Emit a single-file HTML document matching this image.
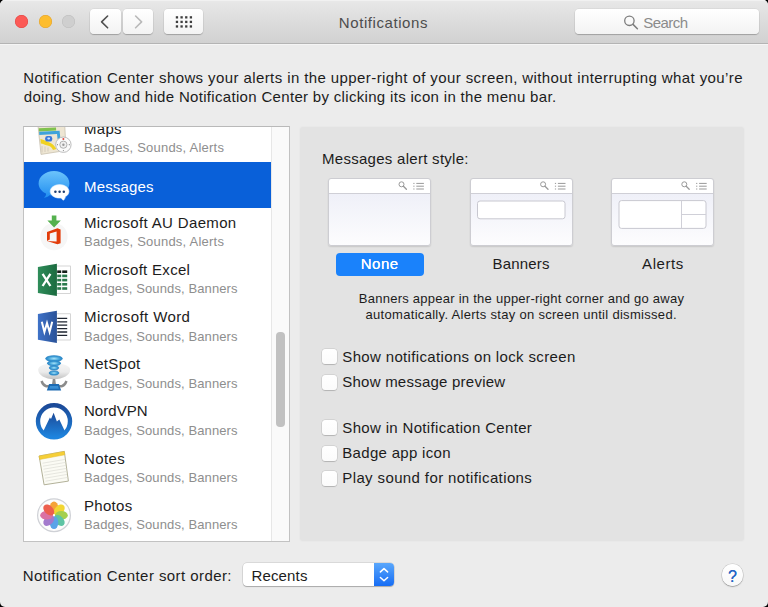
<!DOCTYPE html>
<html lang="en">
<head>
<meta charset="utf-8">
<title>Notifications</title>
<style>
*{box-sizing:border-box;margin:0;padding:0}
html,body{width:768px;height:607px;overflow:hidden;background:#000}
body{font-family:"Liberation Sans",sans-serif;color:#1c1c1c;position:relative}
#win{position:absolute;left:0;top:0;width:768px;height:607px;background:#ececec;border-radius:5px;overflow:hidden}
#tb{position:absolute;left:0;top:0;width:768px;height:44px;background:linear-gradient(#e9e9e9,#e5e5e5 12%,#d1d1d1);border-bottom:1px solid #b4b4b4;box-shadow:inset 0 1px 0 #f1f1f1,0 1px 0 #f5f5f5}
.tl{position:absolute;top:15px;width:13px;height:13px;border-radius:50%}
.btn{position:absolute;top:8.8px;height:24.8px;background:linear-gradient(#ffffff,#f3f3f3);border-radius:4px;box-shadow:0 0 0 .5px rgba(0,0,0,.08),0 1px 1px rgba(0,0,0,.22)}
.t{position:absolute;white-space:nowrap;line-height:20px;height:20px}
#list{position:absolute;left:23px;top:126px;width:267px;height:416px;background:#fff;border:1px solid #c2c2c2;border-top-color:#b9b9b9;overflow:hidden}
#inner{position:absolute;left:0;top:0;width:265px;height:414px}
#sel{position:absolute;left:0;top:35px;width:247px;height:46px;background:#0960d9}
#sbar{position:absolute;left:247px;top:0;width:18px;height:414px;background:#fafafa;border-left:1px solid #e7e7e7}
#thumb{position:absolute;left:251.8px;top:205.3px;width:8.8px;height:94.4px;border-radius:4px;background:#c1c1c1}
#icons{position:absolute;left:0;top:0}
#panel{position:absolute;left:300.3px;top:126.5px;width:444.2px;height:414.6px;background:#e3e3e3;border-radius:3px;box-shadow:0 0 0 1px #e9e9e9}
.th{position:absolute;top:178px;width:103px;height:68px;background:linear-gradient(#fff 0,#fff 14px,#cfcfd6 14px,#cfcfd6 15px,#eff0f8 15px,#fdfdfe 67px);border:1px solid #cdcdd2;border-radius:3px;box-shadow:0 1px 1.5px rgba(0,0,0,.12)}
.cb{position:absolute;left:322px;width:15px;height:15px;background:linear-gradient(#fff,#fbfbfb);border-radius:3.5px;box-shadow:0 0 0 .5px rgba(0,0,0,.14),0 1px 1px rgba(0,0,0,.15)}
svg{position:absolute;overflow:visible}
</style>
</head>
<body>
<div id="win">
 <div id="tb">
  <div class="tl" style="left:15px;background:#fc5a56;box-shadow:inset 0 0 0 .5px #df4340"></div>
  <div class="tl" style="left:38.5px;background:#fdbd2e;box-shadow:inset 0 0 0 .5px #dea032"></div>
  <div class="tl" style="left:61.5px;background:#cfcfcf;box-shadow:inset 0 0 0 .5px #bcbcbc"></div>
  <div class="btn" style="left:90px;width:31px"></div>
  <div class="btn" style="left:122.5px;width:30.5px"></div>
  <div class="btn" style="left:164.2px;width:39.2px"></div>
  <div class="btn" style="left:575px;width:184px"></div>
  <svg width="768" height="44" style="left:0;top:0" viewBox="0 0 768 44">
   <path d="M107.6 16 L101.6 21.9 L107.6 27.8" fill="none" stroke="#505050" stroke-width="1.6" stroke-linecap="round" stroke-linejoin="round"/>
   <path d="M135.6 16 L141.6 21.9 L135.6 27.8" fill="none" stroke="#b9b9b9" stroke-width="1.6" stroke-linecap="round" stroke-linejoin="round"/>
   <g fill="#3d3d3d">
    <rect x="175.8" y="16.2" width="2.3" height="2.3"/><rect x="180.45" y="16.2" width="2.3" height="2.3"/><rect x="185.1" y="16.2" width="2.3" height="2.3"/><rect x="189.75" y="16.2" width="2.3" height="2.3"/>
    <rect x="175.8" y="20.75" width="2.3" height="2.3"/><rect x="180.45" y="20.75" width="2.3" height="2.3"/><rect x="185.1" y="20.75" width="2.3" height="2.3"/><rect x="189.75" y="20.75" width="2.3" height="2.3"/>
    <rect x="175.8" y="25.3" width="2.3" height="2.3"/><rect x="180.45" y="25.3" width="2.3" height="2.3"/><rect x="185.1" y="25.3" width="2.3" height="2.3"/><rect x="189.75" y="25.3" width="2.3" height="2.3"/>
   </g>
   <circle cx="629.4" cy="20.8" r="4.7" fill="none" stroke="#7d7d7d" stroke-width="1.3"/>
   <path d="M633 24.4 L637.4 28.8" stroke="#7d7d7d" stroke-width="1.5" stroke-linecap="round"/>
  </svg>
 </div>

 <div id="list">
  <div id="inner">
   <div id="sel"></div>
   <div id="sbar"></div>
   <div id="thumb"></div>
   <svg id="icons" width="265" height="414" viewBox="24 127 265 414">
<defs>
 <linearGradient id="gMsg" x1="0" y1="0" x2="0" y2="1"><stop offset="0" stop-color="#6cc4fb"/><stop offset="1" stop-color="#1f8df0"/></linearGradient>
 <linearGradient id="gXl" x1="0" y1="0" x2="1" y2="0"><stop offset="0" stop-color="#2f8d5a"/><stop offset="1" stop-color="#1b6b3f"/></linearGradient>
 <linearGradient id="gWd" x1="0" y1="0" x2="1" y2="0"><stop offset="0" stop-color="#3f72c8"/><stop offset="1" stop-color="#2a5298"/></linearGradient>
 <linearGradient id="gNord" x1="0" y1="0" x2="0" y2="1"><stop offset="0" stop-color="#1c4a98"/><stop offset="1" stop-color="#1e84de"/></linearGradient>
 <linearGradient id="gDish" x1="0" y1="0" x2="0" y2="1"><stop offset="0" stop-color="#f6f6f6"/><stop offset=".55" stop-color="#ebebeb"/><stop offset="1" stop-color="#c2c2c2"/></linearGradient>
 <radialGradient id="gArc"><stop offset="0" stop-color="#a8e2f8"/><stop offset=".6" stop-color="#4aa8dc"/><stop offset="1" stop-color="#2483c6"/></radialGradient>
 <clipPath id="clipList"><rect x="24" y="127" width="248" height="414"/></clipPath>
</defs>
<g clip-path="url(#clipList)">
<!-- Maps -->
<g>
 <path d="M37.6 122 L64.5 120 L66 150.5 L41 154.4 Z" fill="#eee6d3" stroke="#c9c2b0" stroke-width=".8"/>
 <path d="M38.7 128.2 L56 127.6 L56.2 130.6 L39 131.4 Z" fill="#7fc24e"/>
 <path d="M39.1 131.8 L59.6 130.8 L60.4 139 L57.6 139.3 L57 134 L39.3 135 Z" fill="#3fa3da"/>
 <path d="M40.4 139 C44 139.5 47 141.5 50.5 143 C53 144 54.5 146 56.5 149 L53 150 C51.5 147 50 146 47.5 145.5 C44.5 145 42.5 143.5 40.8 143.6 Z" fill="#f0d220"/>
 <path d="M42 146 V152.5 M45 146.5 V152 M48 147.5 V151.6" stroke="#d8cfc0" stroke-width="1.2"/>
 <rect x="45.2" y="136" width="7" height="5.6" rx="2.2" fill="#3b78da"/>
 <rect x="47.3" y="137.6" width="2.8" height="1.8" rx=".8" fill="#cfe2fb"/>
 <circle cx="63.4" cy="144.7" r="7.7" fill="#fbfbfb" stroke="#b5b5b5" stroke-width=".9"/>
 <circle cx="63.4" cy="144.7" r="3.6" fill="#f0f0f0" stroke="#a9a9a9" stroke-width=".9"/>
 <circle cx="63.4" cy="144.7" r="1.2" fill="#9a9a9a"/>
 <circle cx="63.4" cy="139.1" r="1" fill="#e0453a"/>
 <circle cx="69.3" cy="144.7" r=".6" fill="#888"/><circle cx="63.4" cy="150.6" r=".6" fill="#888"/><circle cx="57.5" cy="144.7" r=".6" fill="#888"/>
</g>
</g>
<!-- Messages -->
<g>
 <path d="M43.8 197.8 C45.6 196.6 46.2 195 46 193.6 C41.4 191.2 38.6 187.6 38.6 183.4 C38.6 176.6 45.4 171 54 171 C62.6 171 69.4 176.6 69.4 183.4 C69.4 190.2 62.6 195.8 54 195.8 C52.4 195.8 50.9 195.6 49.5 195.3 C48.2 196.8 46.1 197.8 43.8 197.8 Z" fill="url(#gMsg)"/>
 <path d="M63.6 200.2 C62.2 199.6 61.4 198.8 61.2 198 C60.7 198.1 60.1 198.1 59.6 198.1 C54.4 198.1 50.2 195.1 50.2 191.4 C50.2 187.7 54.4 184.6 59.6 184.6 C64.8 184.6 69 187.7 69 191.4 C69 193.5 67.6 195.4 65.5 196.6 C65.2 198 64.4 199.4 63.6 200.2 Z" fill="#fff" stroke="#d9ecfb" stroke-width=".6"/>
 <circle cx="55.4" cy="191.8" r="1.25" fill="#1d3e73"/><circle cx="59.6" cy="191.8" r="1.25" fill="#1d3e73"/><circle cx="63.8" cy="191.8" r="1.25" fill="#1d3e73"/>
</g>
<!-- Microsoft AU Daemon -->
<g>
 <circle cx="54" cy="236.6" r="13.6" fill="#f6f6f6"/>
 <path d="M51.8 215.4 H56.4 V220.4 H60.8 L54.1 227.4 L47.4 220.4 H51.8 Z" fill="#55b14e"/>
 <path d="M57.4 228.3 L60.6 229.4 V243.2 L57.4 244.3 L47 240.9 L49.8 239.6 V233.4 L56.6 231.6 V241.6 L47 240.9 V232.1 Z" fill="#e23c0a" fill-rule="evenodd"/>
</g>
<!-- Excel -->
<g>
 <rect x="56.5" y="266" width="14" height="27.4" fill="#fff" stroke="#c4c4c4" stroke-width=".7"/>
 <g fill="#2a7a4c">
  <rect x="57.2" y="270.4" width="4" height="2.6" fill="#16201a"/><rect x="62.2" y="270.4" width="5" height="2.6" fill="#16201a"/>
  <rect x="57.2" y="274.6" width="4" height="2.6"/><rect x="62.2" y="274.6" width="5" height="2.6"/>
  <rect x="57.2" y="278.8" width="4" height="2.6"/><rect x="62.2" y="278.8" width="5" height="2.6"/>
  <rect x="57.2" y="283" width="4" height="2.6"/><rect x="62.2" y="283" width="5" height="2.6"/>
  <rect x="57.2" y="287.2" width="4" height="2.6"/><rect x="62.2" y="287.2" width="5" height="2.6"/>
 </g>
 <path d="M37.9 267.1 L56.9 263.8 V296 L37.9 293.1 Z" fill="url(#gXl)"/>
 <path d="M42.6 273.8 L50.4 286 M50.4 273.8 L42.6 286" stroke="#fff" stroke-width="2.3" fill="none"/>
</g>
<!-- Word -->
<g>
 <rect x="56.5" y="313.8" width="14" height="26.2" fill="#fff" stroke="#c4c4c4" stroke-width=".7"/>
 <path d="M57.2 318.3H67.2M57.2 321.8H67.2M57.2 325.2H67.2M57.2 328.6H67.2M57.2 332H67.2M57.2 335.4H67.2" stroke="#1e2430" stroke-width="1.3"/>
 <path d="M37.9 314.1 L56.9 310.8 V343 L37.9 339.7 Z" fill="url(#gWd)"/>
 <path d="M41.8 321.8 L44.4 332 L47 323 L49.6 332 L52.2 321.8" stroke="#fff" stroke-width="2" fill="none" stroke-linejoin="miter"/>
</g>
<!-- NetSpot -->
<g>
 <path d="M41.5 381 C43.5 386.5 47.5 387.5 51.5 385 M66.5 381 C64.5 386.5 60.5 387.5 56.5 385" stroke="#6e6e6e" stroke-width="2.4" fill="none" opacity=".8"/>
 <path d="M38.2 369.8 C38.2 365.6 45 363.2 54 363.2 C63 363.2 70.2 365.6 70.2 369.8 C70.2 375 63 379.2 54 379.2 C45 379.2 38.2 375 38.2 369.8 Z" fill="url(#gDish)"/>
 <path d="M52.8 379 L55.2 379 L56 384.4 L52 384.4 Z" fill="#8e8e8e"/>
 <path d="M49.2 384 H58.8 L61.2 390.6 H46.8 Z" fill="#1d6ab2"/>
 <path d="M50 386 H58 L58.8 388.8 H49.2 Z" fill="#3a8fd4"/>
 <ellipse cx="54" cy="358.6" rx="8.4" ry="2.9" fill="url(#gArc)" stroke="#2b86c6" stroke-width=".8"/>
 <ellipse cx="54" cy="363.3" rx="6.6" ry="2.5" fill="url(#gArc)" stroke="#2b86c6" stroke-width=".8"/>
 <ellipse cx="54" cy="367.8" rx="4.6" ry="2.1" fill="url(#gArc)" stroke="#2b86c6" stroke-width=".8"/>
 <ellipse cx="54" cy="373" rx="4.8" ry="2.1" fill="url(#gArc)" stroke="#2b86c6" stroke-width=".8"/>
</g>
<!-- NordVPN -->
<g>
 <circle cx="54" cy="421.3" r="16" fill="#fff" stroke="url(#gNord)" stroke-width="4.4"/>
 <path d="M53.6 412.7 L56.9 421.6 L59.3 419.6 L64.8 431 C62 435 58 437 54 437 C50 437 46 435 43.4 431 L49.9 417.4 L51 419 Z" fill="url(#gNord)"/>
</g>
<!-- Notes -->
<g>
 <path d="M39.1 456 L64.3 451.4 L68.4 481.1 L44.1 484.8 Z" fill="#fbfbf4" stroke="#a9a88d" stroke-width=".9"/>
 <path d="M39.1 456 L64.3 451.4 L64.8 454.8 L39.7 459.5 Z" fill="#f6cf37" stroke="#e5bd2a" stroke-width=".5"/>
 <path d="M42.5 463.2 L65.2 459.4 M43 466.2 L65.6 462.4 M43.5 469.2 L66 465.4 M44 472.2 L66.4 468.4 M44.5 475.2 L66.8 471.4 M45 478.2 L67.2 474.4 M45.5 481.2 L67.6 477.4" stroke="#dcdcd6" stroke-width=".7"/>
</g>
<!-- Photos -->
<g>
 <circle cx="54" cy="515.2" r="16.4" fill="#fcfcfc" stroke="#cfd1d6" stroke-width="1.2"/>
 <g transform="translate(54 515.2)" opacity=".9">
  <ellipse cx="0" cy="-7.4" rx="4.3" ry="6.4" fill="#f59a23"/>
  <ellipse cx="0" cy="-7.4" rx="4.3" ry="6.4" fill="#f2d21e" transform="rotate(45)"/>
  <ellipse cx="0" cy="-7.4" rx="4.3" ry="6.4" fill="#9ccb3c" transform="rotate(90)"/>
  <ellipse cx="0" cy="-7.4" rx="4.3" ry="6.4" fill="#4dbf9b" transform="rotate(135)"/>
  <ellipse cx="0" cy="-7.4" rx="4.3" ry="6.4" fill="#4a9be6" transform="rotate(180)"/>
  <ellipse cx="0" cy="-7.4" rx="4.3" ry="6.4" fill="#9a6dc8" transform="rotate(225)"/>
  <ellipse cx="0" cy="-7.4" rx="4.3" ry="6.4" fill="#d8629a" transform="rotate(270)"/>
  <ellipse cx="0" cy="-7.4" rx="4.3" ry="6.4" fill="#ec4f3c" transform="rotate(315)"/>
  <circle r="1" fill="#fff"/>
 </g>
</g>

   </svg>
<div class="t" style="left:60.00px;top:-8.50px;font-size:15px;letter-spacing:0.300px;color:#1c1c1c;">Maps</div>
<div class="t" style="left:60.00px;top:49.80px;font-size:15px;letter-spacing:0.161px;color:#fff;">Messages</div>
<div class="t" style="left:60.00px;top:85.90px;font-size:15px;letter-spacing:0.351px;color:#1c1c1c;">Microsoft AU Daemon</div>
<div class="t" style="left:60.00px;top:132.80px;font-size:15px;letter-spacing:0.304px;color:#1c1c1c;">Microsoft Excel</div>
<div class="t" style="left:60.00px;top:179.90px;font-size:15px;letter-spacing:0.413px;color:#1c1c1c;">Microsoft Word</div>
<div class="t" style="left:60.00px;top:227.10px;font-size:15px;letter-spacing:0.342px;color:#1c1c1c;">NetSpot</div>
<div class="t" style="left:60.00px;top:274.30px;font-size:15px;letter-spacing:0.037px;color:#1c1c1c;">NordVPN</div>
<div class="t" style="left:60.00px;top:321.60px;font-size:15px;letter-spacing:0.394px;color:#1c1c1c;">Notes</div>
<div class="t" style="left:60.00px;top:368.50px;font-size:15px;letter-spacing:0.290px;color:#1c1c1c;">Photos</div>
<div class="t" style="left:60.00px;top:10.60px;font-size:13px;letter-spacing:0.227px;color:#8e8e8e;">Badges, Sounds, Alerts</div>
<div class="t" style="left:60.00px;top:105.10px;font-size:13px;letter-spacing:0.227px;color:#8e8e8e;">Badges, Sounds, Alerts</div>
<div class="t" style="left:60.00px;top:152.30px;font-size:13px;letter-spacing:0.114px;color:#8e8e8e;">Badges, Sounds, Banners</div>
<div class="t" style="left:60.00px;top:199.60px;font-size:13px;letter-spacing:0.114px;color:#8e8e8e;">Badges, Sounds, Banners</div>
<div class="t" style="left:60.00px;top:246.60px;font-size:13px;letter-spacing:0.114px;color:#8e8e8e;">Badges, Sounds, Banners</div>
<div class="t" style="left:60.00px;top:293.70px;font-size:13px;letter-spacing:0.114px;color:#8e8e8e;">Badges, Sounds, Banners</div>
<div class="t" style="left:60.00px;top:340.80px;font-size:13px;letter-spacing:0.114px;color:#8e8e8e;">Badges, Sounds, Banners</div>
<div class="t" style="left:60.00px;top:388.00px;font-size:13px;letter-spacing:0.114px;color:#8e8e8e;">Badges, Sounds, Banners</div>
  </div>
 </div>

 <div id="panel"></div>
 <div class="th" style="left:328px"></div>
 <div class="th" style="left:470px"></div>
 <div class="th" style="left:611px"></div>
 <svg width="445" height="130" style="left:300px;top:170px" viewBox="300 170 445 130">
  <g id="ti" fill="none" stroke="#999">
   <circle cx="401.5" cy="184.3" r="2.5" stroke-width="1"/>
   <path d="M403.4 186.3 L406.4 189.3" stroke-width="1.3" stroke-linecap="round"/>
   <path d="M413.3 183.4h1.2M413.3 186.2h1.2M413.3 189h1.2M416.3 183.4h7.6M416.3 186.2h7.6M416.3 189h7.6" stroke-width="1"/>
  </g>
  <use href="#ti" x="141.6"/>
  <use href="#ti" x="282.8"/>
  <rect x="477.5" y="201" width="87.5" height="17.8" rx="2.5" fill="#fff" stroke="#c8c8d0" stroke-width="1"/>
  <rect x="619" y="200.6" width="87" height="27.8" rx="2.5" fill="#fff" stroke="#c8c8d0" stroke-width="1"/>
  <path d="M681.5 200.6V228.4M681.5 214.5H706" stroke="#d0d0d8" stroke-width="1" fill="none"/>
  <rect x="336" y="253" width="88" height="23" rx="4" fill="#1a82fb"/>
 </svg>

 <div class="cb" style="top:349.2px"></div>
 <div class="cb" style="top:374.8px"></div>
 <div class="cb" style="top:420.4px"></div>
 <div class="cb" style="top:445.9px"></div>
 <div class="cb" style="top:471.2px"></div>

 <div style="position:absolute;left:242.5px;top:563px;width:151px;height:22.5px;background:#fff;border-radius:4px;box-shadow:0 0 0 .5px rgba(0,0,0,.16),0 1px 1px rgba(0,0,0,.22)"></div>
 <div style="position:absolute;left:374px;top:563px;width:19.5px;height:22.5px;background:linear-gradient(#5aa7fc,#166df4);border-radius:0 4px 4px 0"></div>
 <svg width="19" height="23" style="left:374.5px;top:563px" viewBox="374.5 563 19 23">
  <path d="M379.9 571.9 L383.5 568.6 L387.1 571.9 M379.9 577.5 L383.5 580.8 L387.1 577.5" fill="none" stroke="#fff" stroke-width="1.5" stroke-linecap="round" stroke-linejoin="round"/>
 </svg>
 <div style="position:absolute;left:721.6px;top:564px;width:21.6px;height:21.6px;border-radius:50%;background:linear-gradient(#fff,#f8f8f8);box-shadow:0 0 0 .5px rgba(0,0,0,.16),0 1px 1.2px rgba(0,0,0,.28)"></div>
 <div class="t" style="left:721.5px;width:22px;text-align:center;top:566.8px;color:#2565c4;font-size:16px;text-shadow:0 0 .3px #1e63c8">?</div>

<div class="t" style="left:23.30px;top:67.80px;font-size:15px;letter-spacing:0.406px;color:#1c1c1c;">Notification Center shows your alerts in the upper-right of your screen, without interrupting what you’re</div>
<div class="t" style="left:23.80px;top:87.30px;font-size:15px;letter-spacing:0.318px;color:#1c1c1c;">doing. Show and hide Notification Center by clicking its icon in the menu bar.</div>
<div class="t" style="left:338.80px;top:13.00px;font-size:15px;letter-spacing:0.579px;color:#4d4d4d;">Notifications</div>
<div class="t" style="left:643.30px;top:12.90px;font-size:15px;letter-spacing:-0.560px;color:#8b8b8b;">Search</div>
<div class="t" style="left:322.05px;top:148.55px;font-size:15px;letter-spacing:0.279px;color:#1c1c1c;">Messages alert style:</div>
<div class="t" style="left:360.80px;top:253.70px;font-size:15px;letter-spacing:0.475px;color:#fff;text-shadow:0 0 .4px #fff;">None</div>
<div class="t" style="left:492.50px;top:253.70px;font-size:15px;letter-spacing:0.171px;color:#1c1c1c;">Banners</div>
<div class="t" style="left:642.10px;top:253.70px;font-size:15px;letter-spacing:0.545px;color:#1c1c1c;">Alerts</div>
<div class="t" style="left:358.80px;top:289.00px;font-size:13px;letter-spacing:0.254px;color:#1c1c1c;">Banners appear in the upper-right corner and go away</div>
<div class="t" style="left:365.55px;top:304.50px;font-size:13px;letter-spacing:0.302px;color:#1c1c1c;">automatically. Alerts stay on screen until dismissed.</div>
<div class="t" style="left:342.30px;top:346.70px;font-size:15px;letter-spacing:0.348px;color:#1c1c1c;">Show notifications on lock screen</div>
<div class="t" style="left:342.30px;top:372.20px;font-size:15px;letter-spacing:0.232px;color:#1c1c1c;">Show message preview</div>
<div class="t" style="left:342.30px;top:417.80px;font-size:15px;letter-spacing:0.332px;color:#1c1c1c;">Show in Notification Center</div>
<div class="t" style="left:342.30px;top:443.30px;font-size:15px;letter-spacing:0.304px;color:#1c1c1c;">Badge app icon</div>
<div class="t" style="left:342.30px;top:467.70px;font-size:15px;letter-spacing:0.380px;color:#1c1c1c;">Play sound for notifications</div>
<div class="t" style="left:22.80px;top:565.80px;font-size:15px;letter-spacing:0.427px;color:#1c1c1c;">Notification Center sort order:</div>
<div class="t" style="left:251.40px;top:565.50px;font-size:15px;letter-spacing:0.167px;color:#1c1c1c;">Recents</div>
</div>
</body>
</html>
